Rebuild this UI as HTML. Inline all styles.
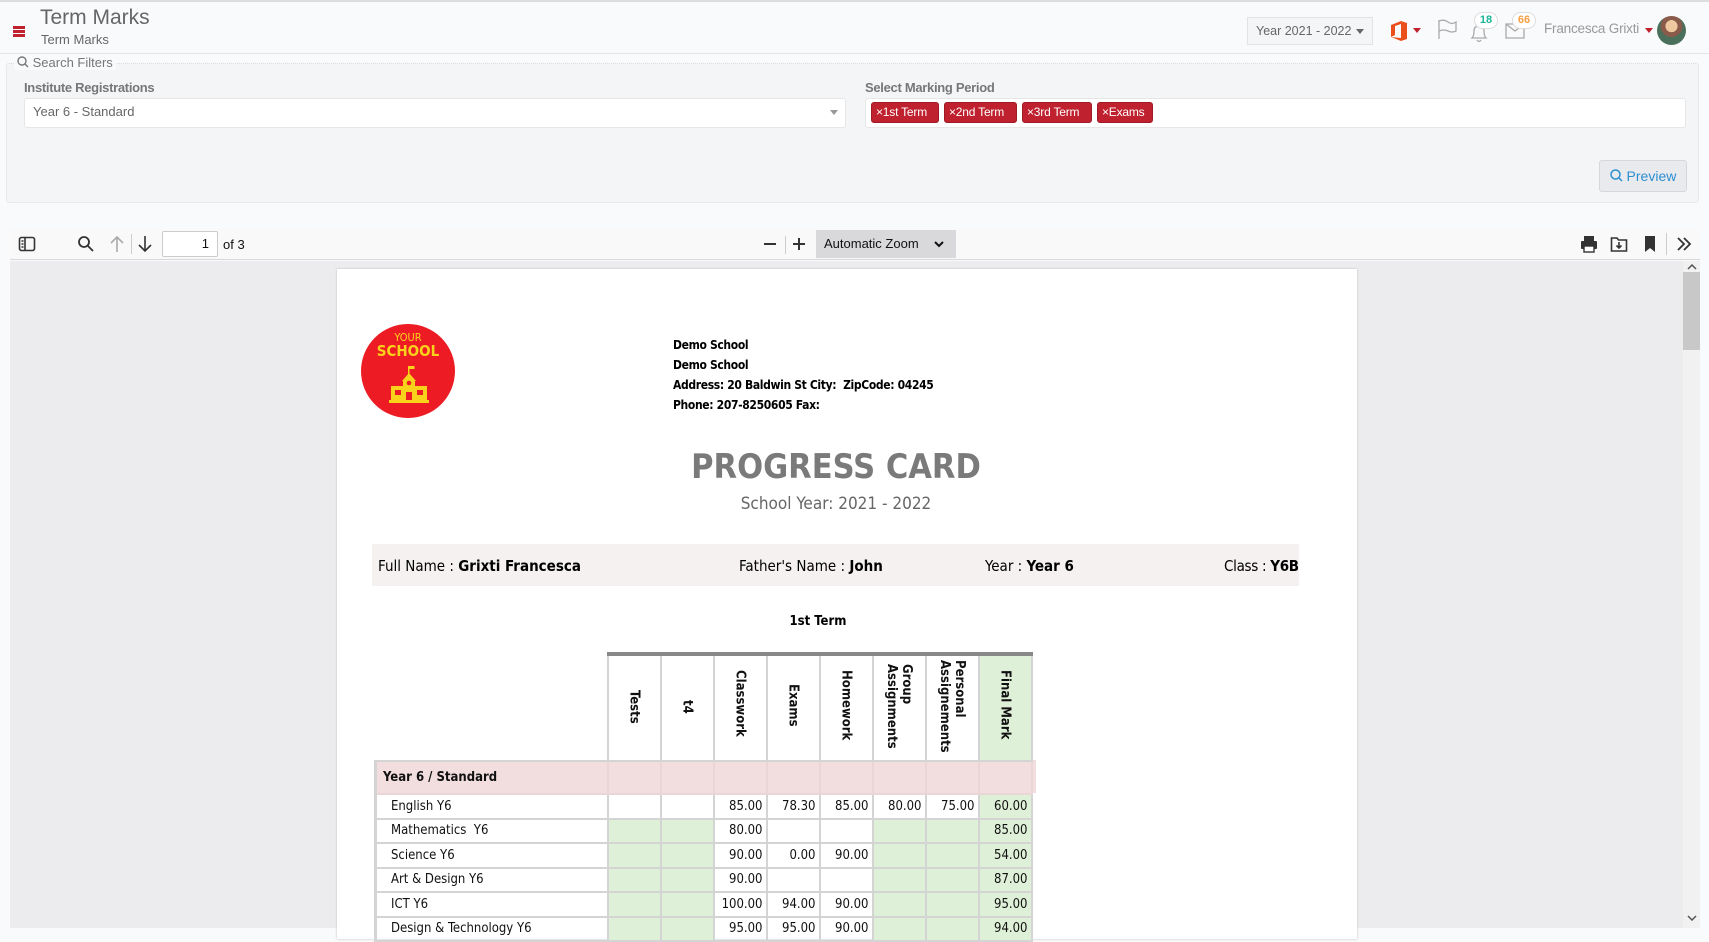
<!DOCTYPE html>
<html><head><meta charset="utf-8"><style>
*{box-sizing:border-box;margin:0;padding:0}
body{width:1709px;height:928px;overflow:hidden;background:#f9fafc;font-family:"Liberation Sans",sans-serif;position:relative;color:#555}
.a{position:absolute}
.tag{position:absolute;top:102px;height:21px;background:#c0212e;border:1px solid #9e1a24;border-radius:3px;color:#fff;font-size:12px;line-height:19px;padding:0 4px;white-space:nowrap;overflow:hidden;letter-spacing:-.2px}
.doc{font-family:"DejaVu Sans Condensed","DejaVu Sans",sans-serif;color:#000}
table.m{position:absolute;left:374px;top:652px;border-collapse:collapse;font-family:"DejaVu Sans Condensed","DejaVu Sans",sans-serif;font-size:13px;color:#111;table-layout:fixed;width:656px}
table.m td{border:2px solid #d4d4d4;height:24.5px;text-align:right;padding:0 3px;width:53px;overflow:hidden;white-space:nowrap}
table.m td.n{width:232px;text-align:left;padding-left:14px;border-left:3px solid #d4d4d4}
table.m tr.h td{height:107px;vertical-align:top;text-align:center;font-weight:bold;font-size:13px;border-top:4px solid #888;white-space:normal}
table.m tr.h td.e{border:none;border-bottom:2px solid #d4d4d4}
.v{writing-mode:vertical-rl;display:inline-block;padding-top:14px;line-height:15px;text-align:left}
.g{background:#dff0d8}
tr.grp td{background:#f2dede;height:33px;border-color:#ead6d6}
</style></head><body>
<div class="a" style="left:0;top:0;width:1709px;height:2px;background:#ddd"></div>
<div class="a" style="left:13px;top:26px;width:12px;height:3px;background:#c0212e;box-shadow:0 4px 0 #c0212e,0 8px 0 #c0212e"></div>
<div class="a" style="left:40px;top:6px;font-size:21px;color:#666">Term Marks</div>
<div class="a" style="left:41px;top:32px;font-size:13px;color:#666">Term Marks</div>
<div class="a" style="left:0;top:53px;width:1709px;height:1px;background:#e2e4e8"></div>
<div class="a" style="left:1247px;top:17px;width:126px;height:28px;background:#f4f5f7;border:1px solid #e3e3e3;font-size:12.5px;line-height:26px;padding-left:8px;color:#666;white-space:nowrap">Year 2021 - 2022</div>
<div class="a" style="left:1356px;top:29px;border:4px solid transparent;border-top:5px solid #666"></div>
<svg class="a" style="left:1388px;top:20px" width="22" height="22" viewBox="0 0 22 22"><path d="M3 5 L13 1 L19 3 V19 L13 21 L3 17 L13 18 V4 L7 6 V15 L3 17Z" fill="#eb4f1c"/></svg>
<div class="a" style="left:1413px;top:28px;width:0;height:0;border:4px solid transparent;border-top:5px solid #c0212e"></div>
<svg class="a" style="left:1436px;top:18px" width="22" height="22" viewBox="0 0 22 22" fill="none" stroke="#aaa" stroke-width="1.3"><path d="M3 2 V21 M3 3 Q8 1 12 4 T20 4 V13 Q16 15 12 13 T3 13"/></svg>
<svg class="a" style="left:1468px;top:22px" width="22" height="22" viewBox="0 0 22 22" fill="none" stroke="#aaa" stroke-width="1.3"><path d="M4 16 Q6 14 6 9 Q6 4 11 4 Q16 4 16 9 Q16 14 18 16Z M9 18 Q11 21 13 18"/></svg>
<div class="a" style="left:1474px;top:12px;width:24px;height:17px;border-radius:9px;background:#fff;border:1px solid #ddd;font-size:11px;font-weight:bold;color:#1bb394;text-align:center;line-height:15px">18</div>
<svg class="a" style="left:1504px;top:20px" width="24" height="20" viewBox="0 0 24 20" fill="none" stroke="#aaa" stroke-width="1.3"><path d="M2 4 H20 V18 H2Z M2 4 L11 11 L20 4"/></svg>
<div class="a" style="left:1512px;top:12px;width:24px;height:17px;border-radius:9px;background:#fff;border:1px solid #ddd;font-size:11px;font-weight:bold;color:#f6a043;text-align:center;line-height:15px">66</div>
<div class="a" style="left:1544px;top:21px;font-size:13.5px;color:#999;letter-spacing:-.2px">Francesca Grixti</div>
<div class="a" style="left:1645px;top:28px;width:0;height:0;border:4px solid transparent;border-top:5px solid #c0212e"></div>
<div class="a" style="left:1657px;top:16px;width:29px;height:29px;border-radius:50%;background:radial-gradient(circle at 50% 35%,#f0c8a0 0 25%,#8a5a4a 26% 45%,#4a6f5a 46%)"></div>
<div class="a" style="left:6px;top:63px;width:1693px;height:140px;background:#f4f5f7;border:1px dotted #ddd;border-radius:3px"></div>
<div class="a" style="left:14px;top:55px;background:#f9fafc;padding:0 3px;font-size:13px;color:#777;white-space:nowrap"><svg width="12" height="12" viewBox="0 0 12 12" fill="none" stroke="#777" stroke-width="1.4" style="vertical-align:-1px"><circle cx="5" cy="5" r="4"/><path d="M8 8 L11 11"/></svg> Search Filters</div>
<div class="a" style="left:24px;top:80px;font-size:13px;font-weight:bold;color:#777;letter-spacing:-.3px">Institute Registrations</div>
<div class="a" style="left:24px;top:98px;width:822px;height:30px;background:#fff;border:1px solid #e6e6e6;border-radius:3px;font-size:13px;line-height:26px;padding-left:8px;color:#666">Year 6 - Standard</div>
<div class="a" style="left:830px;top:110px;border:4px solid transparent;border-top:5px solid #999"></div>
<div class="a" style="left:865px;top:80px;font-size:13px;font-weight:bold;color:#777;letter-spacing:-.3px">Select Marking Period</div>
<div class="a" style="left:865px;top:98px;width:821px;height:30px;background:#fff;border:1px solid #e6e6e6;border-radius:3px"></div>
<div class="tag" style="left:871px;width:68px">×1st Term</div>
<div class="tag" style="left:944px;width:73px">×2nd Term</div>
<div class="tag" style="left:1022px;width:70px">×3rd Term</div>
<div class="tag" style="left:1097px;width:56px">×Exams</div>
<div class="a" style="left:1599px;top:160px;width:88px;height:32px;background:#e8eaee;border:1px solid #d5d7db;border-radius:3px;color:#2d8fd0;font-size:14px;line-height:30px;text-align:center"><svg width="13" height="13" viewBox="0 0 13 13" fill="none" stroke="#2d8fd0" stroke-width="1.5" style="vertical-align:-1px"><circle cx="5.5" cy="5.5" r="4.5"/><path d="M9 9 L12 12"/></svg> Preview</div>
<div class="a" style="left:10px;top:228px;width:1690px;height:32px;background:#f9f9fa;border-bottom:1px solid #d8d8d8"></div>
<svg class="a" style="left:18px;top:236px" width="18" height="16" viewBox="0 0 18 16" fill="none" stroke="#333" stroke-width="1.6"><rect x="1.5" y="1.5" width="15" height="13" rx="2"/><path d="M7 2 V14 M3.5 5 H5.5 M3.5 8 H5.5 M3.5 11 H5.5"/></svg>
<svg class="a" style="left:77px;top:235px" width="18" height="18" viewBox="0 0 18 18" fill="none" stroke="#333" stroke-width="1.8"><circle cx="7" cy="7" r="5"/><path d="M11 11 L16 16"/></svg>
<svg class="a" style="left:109px;top:235px" width="16" height="18" viewBox="0 0 16 18" fill="none" stroke="#aaa" stroke-width="1.6"><path d="M8 17 V2 M2 8 L8 2 L14 8"/></svg>
<div class="a" style="left:131px;top:234px;width:1px;height:20px;background:#ccc"></div>
<svg class="a" style="left:137px;top:235px" width="16" height="18" viewBox="0 0 16 18" fill="none" stroke="#333" stroke-width="1.6"><path d="M8 1 V16 M2 10 L8 16 L14 10"/></svg>
<div class="a" style="left:162px;top:231px;width:56px;height:26px;background:#fff;border:1px solid #ccc;border-radius:2px;font-size:13px;line-height:24px;text-align:right;padding-right:8px;color:#111">1</div>
<div class="a" style="left:223px;top:237px;font-size:13px;color:#111">of 3</div>
<div class="a" style="left:764px;top:243px;width:12px;height:2px;background:#333"></div>
<div class="a" style="left:785px;top:236px;width:1px;height:18px;background:#ccc"></div>
<div class="a" style="left:793px;top:243px;width:12px;height:2px;background:#333"></div>
<div class="a" style="left:798px;top:238px;width:2px;height:12px;background:#333"></div>
<div class="a" style="left:816px;top:230px;width:140px;height:28px;background:#d9d9dc;font-size:13px;line-height:28px;padding-left:8px;color:#111">Automatic Zoom</div>
<svg class="a" style="left:934px;top:240px" width="10" height="8" viewBox="0 0 10 8" fill="none" stroke="#111" stroke-width="2"><path d="M1 2 L5 6 L9 2"/></svg>
<svg class="a" style="left:1580px;top:235px" width="18" height="18" viewBox="0 0 18 18" fill="#333"><rect x="4" y="1" width="10" height="5"/><rect x="1" y="6" width="16" height="8" rx="1"/><rect x="4" y="11" width="10" height="6" fill="#fff" stroke="#333" stroke-width="1.4"/></svg>
<svg class="a" style="left:1610px;top:235px" width="18" height="18" viewBox="0 0 18 18" fill="none" stroke="#333" stroke-width="1.6"><path d="M1.5 3 H7 L8.5 5 H16.5 V16 H1.5Z M9 7 V13 M6.5 10.5 L9 13 L11.5 10.5"/></svg>
<svg class="a" style="left:1644px;top:235px" width="12" height="18" viewBox="0 0 12 18" fill="#333"><path d="M1 1 H11 V17 L6 13 L1 17Z"/></svg>
<div class="a" style="left:1666px;top:233px;width:1px;height:22px;background:#ccc"></div>
<svg class="a" style="left:1676px;top:236px" width="16" height="16" viewBox="0 0 16 16" fill="none" stroke="#333" stroke-width="1.8"><path d="M2 2 L8 8 L2 14 M8 2 L14 8 L8 14"/></svg>
<div class="a" style="left:10px;top:261px;width:1673px;height:667px;background:#ececef"></div>
<div class="a" style="left:1683px;top:261px;width:17px;height:667px;background:#f1f1f1"></div>
<div class="a" style="left:1683px;top:272px;width:17px;height:78px;background:#c8c8c8"></div>
<svg class="a" style="left:1687px;top:264px" width="10" height="6" viewBox="0 0 10 6" fill="none" stroke="#555" stroke-width="1.5"><path d="M1 5 L5 1 L9 5"/></svg>
<svg class="a" style="left:1687px;top:915px" width="10" height="6" viewBox="0 0 10 6" fill="none" stroke="#555" stroke-width="1.5"><path d="M1 1 L5 5 L9 1"/></svg>
<div class="a" style="left:337px;top:269px;width:1020px;height:670px;background:#fff;box-shadow:0 0 2px #bbb"></div>
<div class="a" style="left:361px;top:324px;width:94px;height:94px;border-radius:50%;background:#ed1c24"></div>
<div class="a doc" style="left:361px;top:331px;width:94px;text-align:center;color:#f9d21b;font-size:11px">YOUR</div>
<div class="a doc" style="left:361px;top:342px;width:94px;text-align:center;color:#f9d21b;font-size:15px;font-weight:bold">SCHOOL</div>
<svg class="a" style="left:388px;top:364px" width="42" height="42" viewBox="0 0 42 42" fill="#f9d21b"><rect x="20" y="2" width="1.5" height="8"/><rect x="21.5" y="2" width="5" height="3"/><path d="M14 17 L21 9 L28 17Z"/><rect x="15" y="17" width="12" height="8"/><rect x="3" y="22" width="36" height="14"/><rect x="1" y="36" width="40" height="3"/><rect x="18" y="28" width="6" height="8" fill="#ed1c24"/><rect x="7" y="26" width="6" height="5" fill="#ed1c24"/><rect x="29" y="26" width="6" height="5" fill="#ed1c24"/><circle cx="21" cy="19" r="2.3" fill="#ed1c24"/></svg>
<div class="a doc" style="left:673px;top:335px;font-size:12px;font-weight:bold;line-height:20px;letter-spacing:-.35px">Demo School<br>Demo School<br>Address: 20 Baldwin St City:&nbsp; ZipCode: 04245<br>Phone: 207-8250605 Fax:</div>
<div class="a doc" style="left:600px;top:447px;width:472px;text-align:center;font-size:34px;font-weight:bold;color:#7a7a7a">PROGRESS CARD</div>
<div class="a doc" style="left:600px;top:494px;width:472px;text-align:center;font-size:17px;color:#666">School Year: 2021 - 2022</div>
<div class="a" style="left:372px;top:544px;width:927px;height:42px;background:#f4f1f0"></div>
<div class="a doc" style="left:378px;top:557px;font-size:15px">Full Name : <b>Grixti Francesca</b></div>
<div class="a doc" style="left:739px;top:557px;font-size:15px">Father's Name : <b>John</b></div>
<div class="a doc" style="left:985px;top:557px;font-size:15px">Year : <b>Year 6</b></div>
<div class="a doc" style="left:1224px;top:557px;font-size:15px;letter-spacing:-.3px">Class : <b>Y6B</b></div>
<div class="a doc" style="left:760px;top:614px;width:116px;text-align:center;font-size:13px;font-weight:bold">1st Term</div>
<div class="a" style="left:374px;top:760px;width:662px;height:33px;background:#f2dede"></div>
<table class="m">
<col style="width:232px"><col span="8" style="width:53px">
<tr class="h"><td class="n e"></td><td><span class="v" style="padding-top:34px">Tests</span></td><td><span class="v" style="padding-top:44px">t4</span></td><td><span class="v">Classwork</span></td><td><span class="v" style="padding-top:28px">Exams</span></td><td><span class="v">Homework</span></td><td><span class="v" style="padding-top:8px">Group<br>Assignments</span></td><td><span class="v" style="padding-top:4px">Personal<br>Assignements</span></td><td class="g"><span class="v">Final Mark</span></td></tr>
<tr class="grp"><td class="n" style="font-weight:bold;padding-left:6px;font-size:13px">Year 6 / Standard</td><td></td><td></td><td></td><td></td><td></td><td></td><td></td><td></td></tr>
<tr><td class="n">English Y6</td><td></td><td></td><td>85.00</td><td>78.30</td><td>85.00</td><td>80.00</td><td>75.00</td><td class="g">60.00</td></tr>
<tr><td class="n">Mathematics&nbsp; Y6</td><td class="g"></td><td class="g"></td><td>80.00</td><td></td><td></td><td class="g"></td><td class="g"></td><td class="g">85.00</td></tr>
<tr><td class="n">Science Y6</td><td class="g"></td><td class="g"></td><td>90.00</td><td>0.00</td><td>90.00</td><td class="g"></td><td class="g"></td><td class="g">54.00</td></tr>
<tr><td class="n">Art &amp; Design Y6</td><td class="g"></td><td class="g"></td><td>90.00</td><td></td><td></td><td class="g"></td><td class="g"></td><td class="g">87.00</td></tr>
<tr><td class="n">ICT Y6</td><td class="g"></td><td class="g"></td><td>100.00</td><td>94.00</td><td>90.00</td><td class="g"></td><td class="g"></td><td class="g">95.00</td></tr>
<tr><td class="n">Design &amp; Technology Y6</td><td class="g"></td><td class="g"></td><td>95.00</td><td>95.00</td><td>90.00</td><td class="g"></td><td class="g"></td><td class="g">94.00</td></tr>
</table>
</body></html>
